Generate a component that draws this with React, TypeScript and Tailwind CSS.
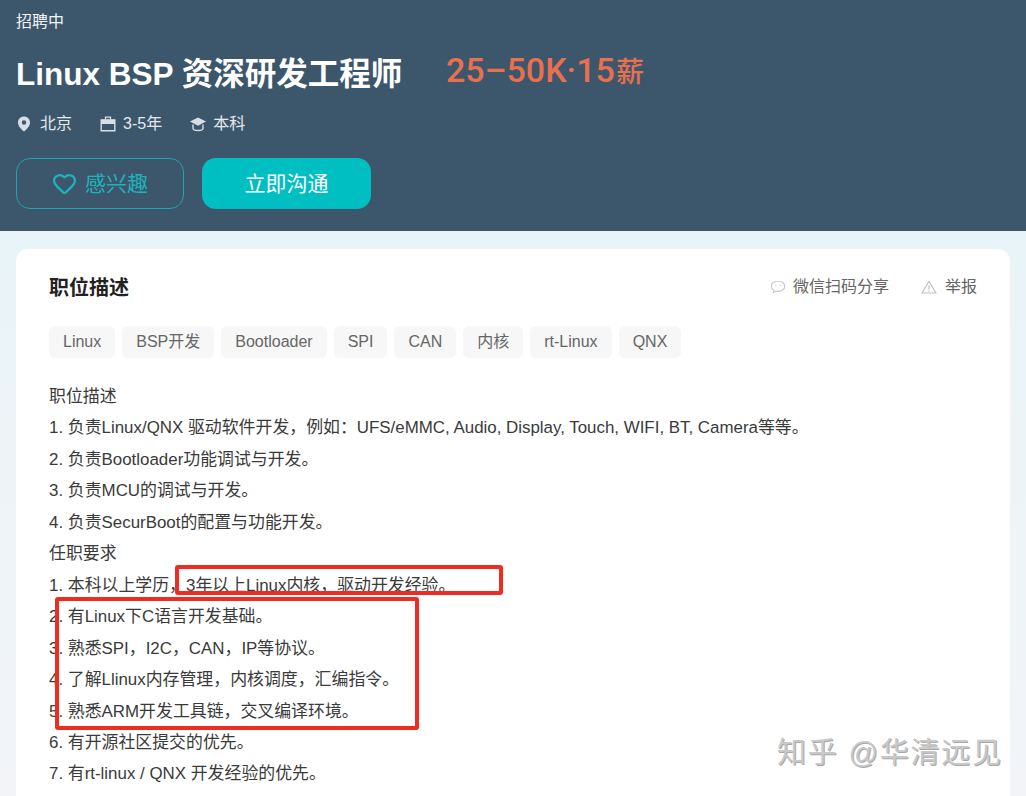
import React from "react";
import { Heart } from "lucide-react";

const cjk = "font-['Liberation_Sans','Noto_Sans_CJK_SC',sans-serif]";

const tags = ["Linux", "BSP开发", "Bootloader", "SPI", "CAN", "内核", "rt-Linux", "QNX"];

const lines = [
  "职位描述",
  "1. 负责Linux/QNX 驱动软件开发，例如：UFS/eMMC, Audio, Display, Touch, WIFI, BT, Camera等等。",
  "2. 负责Bootloader功能调试与开发。",
  "3. 负责MCU的调试与开发。",
  "4. 负责SecurBoot的配置与功能开发。",
  "任职要求",
  "1. 本科以上学历，3年以上Linux内核，驱动开发经验。",
  "2. 有Linux下C语言开发基础。",
  "3. 熟悉SPI，I2C，CAN，IP等协议。",
  "4. 了解Llinux内存管理，内核调度，汇编指令。",
  "5. 熟悉ARM开发工具链，交叉编译环境。",
  "6. 有开源社区提交的优先。",
  "7. 有rt-linux / QNX 开发经验的优先。",
];

function Pin() {
  return (
    <svg width="16" height="18" viewBox="0 0 16 18" fill="none">
      <path fillRule="evenodd" clipRule="evenodd" d="M8 1.5c-3.4 0-6 2.6-6 5.9 0 3.6 3.4 7 6 9.1 2.6-2.1 6-5.5 6-9.1 0-3.3-2.6-5.9-6-5.9Zm0 3.8a2.2 2.2 0 1 1 0 4.4 2.2 2.2 0 0 1 0-4.4Z" fill="#d6dee6" />
    </svg>
  );
}

function Case() {
  return (
    <svg width="16" height="16" viewBox="0 0 16 16" fill="none">
      <path d="M5.5 3.5V1.2h5v2.3" stroke="#d6dee6" strokeWidth="1.3" />
      <rect x="0.5" y="3.2" width="15" height="4.8" fill="#d6dee6" />
      <path d="M1.2 8v6.8h13.6V8" stroke="#d6dee6" strokeWidth="1.4" />
    </svg>
  );
}

function Cap() {
  return (
    <svg width="18" height="16" viewBox="0 0 18 16" fill="none">
      <path d="M9 1.5 17 5.6 9 9.7 1 5.6Z" fill="#d6dee6" />
      <path d="M4 8.6v3.6c0 1.3 2.4 2.3 5 2.3s5-1 5-2.3V8.6" stroke="#d6dee6" strokeWidth="1.4" />
    </svg>
  );
}

function Bubble() {
  return (
    <svg width="16" height="16" viewBox="0 0 16 16" fill="none">
      <path d="M8 2C4.2 2 1.3 4.3 1.3 7.2c0 1.7 1 3.1 2.5 4.1l-.4 2.2 2.5-1.3c.7.1 1.4.2 2.1.2 3.8 0 6.7-2.3 6.7-5.2S11.8 2 8 2Z" stroke="#c4c8cc" strokeWidth="1.1" />
      <circle cx="5.8" cy="6.6" r="0.7" fill="#c4c8cc" />
      <circle cx="10.2" cy="6.6" r="0.7" fill="#c4c8cc" />
    </svg>
  );
}

function Warn() {
  return (
    <svg width="16" height="16" viewBox="0 0 16 16" fill="none">
      <path d="M8 2.2 15 14H1Z" stroke="#bdbfc2" strokeWidth="1.2" strokeLinejoin="round" />
      <path d="M8 6.5v4" stroke="#bdbfc2" strokeWidth="1.2" />
      <circle cx="8" cy="12" r="0.7" fill="#bdbfc2" />
    </svg>
  );
}

export default function App() {
  return (
    <div className={`relative h-[796px] w-[1026px] overflow-hidden bg-gradient-to-b from-[#e5f4f8] to-[#f2f4f8] ${cjk}`}>
      <header className="h-[231px] bg-[#3c566c] pl-4">
        <div className="pt-[10px] text-[16px] leading-[23px] text-[#f1f4f6]">招聘中</div>
        <div className="mt-[15px] flex h-[44px] items-center">
          <h1 className="relative top-[4px] w-[430px] text-[31.5px] font-bold leading-[44px] text-white">Linux BSP 资深研发工程师</h1>
          <div className="relative top-[1px] flex items-baseline font-['Roboto','Noto_Sans_CJK_SC',sans-serif] text-[34px] font-medium leading-[44px] text-[#e8704f]">
            25–50K·15<span className="ml-[1px] text-[28px]">薪</span>
          </div>
        </div>
        <div className="mt-[20px] flex h-[24px] items-center text-[16px] text-[#e4e9ee]">
          <span className="flex items-center gap-[8px]"><Pin />北京</span>
          <span className="ml-[28px] flex items-center gap-[7px]"><Case />3-5年</span>
          <span className="ml-[27px] flex items-center gap-[6px]"><Cap />本科</span>
        </div>
        <div className="mt-[22px] flex gap-[18px]">
          <button className="flex h-[51px] w-[168px] items-center justify-center gap-[8px] rounded-[14px] border border-[#20a5ae] text-[21px] text-[#1eb3ba]">
            <Heart size={25} strokeWidth={2.2} />
            感兴趣
          </button>
          <button className="h-[51px] w-[169px] rounded-[14px] bg-[#00bfc2] text-[21px] text-white">立即沟通</button>
        </div>
      </header>

      <main className="mx-4 mt-[18px] h-[600px] rounded-t-[12px] bg-white px-[33px] pt-[24px]">
        <div className="flex h-[30px] items-center justify-between">
          <h2 className="text-[20px] font-bold text-[#222]">职位描述</h2>
          <div className="flex -translate-y-[1px] items-center text-[16px] text-[#666]">
            <span className="flex items-center gap-[7px]"><Bubble />微信扫码分享</span>
            <span className="ml-[32px] flex items-center gap-[8px]"><Warn />举报</span>
          </div>
        </div>
        <div className="mt-[23px] flex gap-[7px]">
          {tags.map((t) => (
            <span key={t} className="flex h-[32px] items-center rounded-[6px] bg-[#f7f7f7] px-[14px] text-[16px] text-[#666]">{t}</span>
          ))}
        </div>
        <div className="mt-[23px] text-[16.9px] leading-[31.45px] text-[#3a3a3a]">
          {lines.map((l) => (
            <p key={l}>{l}</p>
          ))}
        </div>
      </main>

      <div className="absolute left-[175px] top-[565px] h-[30px] w-[328px] rounded-[3px] border-4 border-[#ee2c22]" />
      <div className="absolute left-[55px] top-[597px] h-[133px] w-[364px] rounded-[3px] border-4 border-[#ee2c22]" />
      <div className="absolute left-[777px] top-[732px] whitespace-nowrap text-[29px] leading-[42px] tracking-[1.8px] text-[#c9c9c9] [text-shadow:1px_1px_0_#a8a8a8]">知乎 @华清远见</div>
    </div>
  );
}
